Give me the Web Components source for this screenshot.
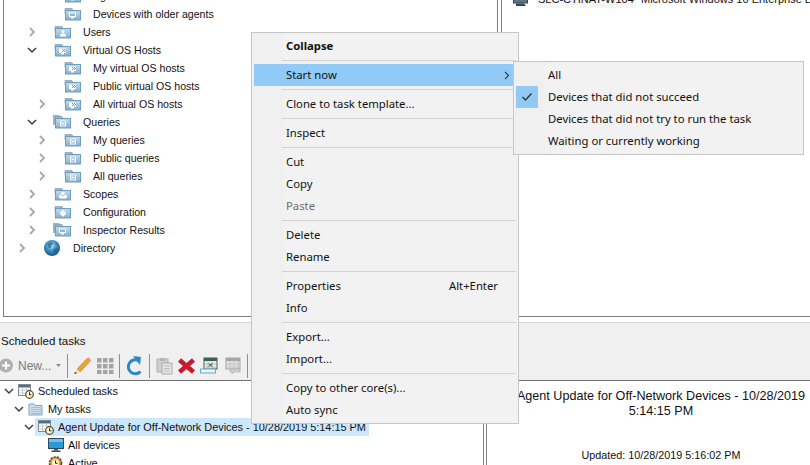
<!DOCTYPE html>
<html>
<head>
<meta charset="utf-8">
<title>Scheduled tasks</title>
<style>
  html, body { margin: 0; padding: 0; background: #fff; overflow: hidden; }
  body { font: 11px "Liberation Sans", sans-serif; color: #111; }
</style>
</head>
<body>
<app-window>
  <tree-view slot="top-left" style="--pane-top:-13px;--base:8px;--chev:20px;--icon-gap:13px;--text-gap:12px;--tree-font:10.6px">
    <tree-row level="3" icon="monitor" text="Agents"></tree-row>
    <tree-row level="3" icon="monitor" text="Devices with older agents"></tree-row>
    <tree-row level="2" chevron="closed" icon="user" text="Users"></tree-row>
    <tree-row level="2" chevron="open" icon="virtual" text="Virtual OS Hosts"></tree-row>
    <tree-row level="3" icon="virtual" text="My virtual OS hosts"></tree-row>
    <tree-row level="3" icon="virtual" text="Public virtual OS hosts"></tree-row>
    <tree-row level="3" chevron="closed" icon="virtual" text="All virtual OS hosts"></tree-row>
    <tree-row level="2" chevron="open" icon="query-stack" text="Queries"></tree-row>
    <tree-row level="3" chevron="closed" icon="query" text="My queries"></tree-row>
    <tree-row level="3" chevron="closed" icon="query" text="Public queries"></tree-row>
    <tree-row level="3" chevron="closed" icon="query" text="All queries"></tree-row>
    <tree-row level="2" chevron="closed" icon="scope" text="Scopes"></tree-row>
    <tree-row level="2" chevron="closed" icon="gear" text="Configuration"></tree-row>
    <tree-row level="2" chevron="closed" icon="monitor-stack" text="Inspector Results"></tree-row>
    <tree-row level="1" chevron="closed" icon="globe" text="Directory"></tree-row>
  </tree-view>
  <device-line slot="top-right" name="SLC-CTINAT-W104" os="Microsoft Windows 10 Enterprise Lo"></device-line>
  <task-bar slot="band" title="Scheduled tasks"></task-bar>
  <tree-view slot="bottom-left" style="--pane-top:1px;--base:0px;--chev:18px;--icon-gap:0px;--text-gap:4px;--tree-font:10.9px">
    <tree-row level="1" chevron="open" icon="task" text="Scheduled tasks"></tree-row>
    <tree-row level="2" chevron="open" icon="task-folder" text="My tasks"></tree-row>
    <tree-row level="3" chevron="open" icon="task" selected text="Agent Update for Off-Network Devices - 10/28/2019 5:14:15 PM"></tree-row>
    <tree-row level="4" chevron="none" icon="screen" text="All devices"></tree-row>
    <tree-row level="4" chevron="none" icon="active" text="Active"></tree-row>
  </tree-view>
  <task-summary slot="bottom-right" heading="Agent Update for Off-Network Devices - 10/28/2019 5:14:15 PM" updated="Updated: 10/28/2019 5:16:02 PM"></task-summary>

  <ctx-menu slot="overlay" style="left:251px;top:32px;width:268px">
    <menu-item bold label="Collapse"></menu-item>
    <menu-sep></menu-sep>
    <menu-item active arrow label="Start now"></menu-item>
    <menu-sep></menu-sep>
    <menu-item label="Clone to task template..."></menu-item>
    <menu-sep></menu-sep>
    <menu-item label="Inspect"></menu-item>
    <menu-sep></menu-sep>
    <menu-item label="Cut"></menu-item>
    <menu-item label="Copy"></menu-item>
    <menu-item disabled label="Paste"></menu-item>
    <menu-sep></menu-sep>
    <menu-item label="Delete"></menu-item>
    <menu-item label="Rename"></menu-item>
    <menu-sep></menu-sep>
    <menu-item label="Properties" shortcut="Alt+Enter"></menu-item>
    <menu-item label="Info"></menu-item>
    <menu-sep></menu-sep>
    <menu-item label="Export..."></menu-item>
    <menu-item label="Import..."></menu-item>
    <menu-sep></menu-sep>
    <menu-item label="Copy to other core(s)..."></menu-item>
    <menu-item label="Auto sync"></menu-item>
  </ctx-menu>
  <ctx-menu slot="overlay" style="left:513px;top:61px;width:291px">
    <menu-item label="All"></menu-item>
    <menu-item checked label="Devices that did not succeed"></menu-item>
    <menu-item label="Devices that did not try to run the task"></menu-item>
    <menu-item label="Waiting or currently working"></menu-item>
  </ctx-menu>
</app-window>

<script>
// folder icons share one body, only the white mark changes
const folderGrad = '<defs><linearGradient id="f" x1="0" y1="0" x2="0" y2="1"><stop offset="0" stop-color="#c3dbec"/><stop offset="1" stop-color="#85b0d0"/></linearGradient></defs>';
const folder = (mark, stacked) => `<svg width="18" height="16" viewBox="0 0 18 16">${folderGrad}
  ${stacked ? '<path d="M0 1h6l1 1v9H0z" fill="#9fb4c6"/>' : ''}
  <path d="M2 2.5h7l1 2h7v3H2z" fill="#a3b5c4" stroke="#8ba3b6" stroke-width=".8"/>
  <rect x="2.5" y="4.500" width="15" height="9.500" fill="url(#f)" stroke="#6f9dbe"/>
  ${mark}</svg>`;
const marks = {
  monitor: '<rect x="6" y="6.500" width="7" height="4.500" fill="#fff"/><rect x="7" y="7.500" width="5" height="2.500" fill="#8fb7d4"/><rect x="8" y="11" width="3" height="1.500" fill="#fff"/>',
  user: '<circle cx="10" cy="7.500" r="1.500" fill="#fff"/><path d="M7 12.500c0-2.500 1-3 3-3s3 .5 3 3z" fill="#fff"/>',
  virtual: '<rect x="6" y="6.500" width="7" height="4.500" fill="#fff"/><path d="M9 7h1v1H9zM11 7h1v1h-1zM10 8h1v1h-1zM12 8h1v1h-1zM9 9h1v1H9zM11 9h1v1h-1z" fill="#6f9dbe"/><rect x="8" y="11" width="3" height="1.500" fill="#fff"/>',
  query: '<path d="M7 6.500h6v6H7z" fill="#fff"/><path d="M9 7v5M11 7v5" stroke="#7fa8c8" stroke-width="1"/><path d="M9 9.500h2" stroke="#fff"/>',
  scope: '<circle cx="10" cy="7.500" r="1.700" fill="#fff"/><circle cx="7.500" cy="10.500" r="1.700" fill="#fff"/><circle cx="12.500" cy="10.500" r="1.700" fill="#fff"/><rect x="7" y="10" width="6" height="2.500" fill="#fff"/>',
  gear: '<circle cx="10" cy="9.300" r="2.600" fill="#fff"/><circle cx="10" cy="9.300" r="1" fill="#8fb7d4"/><path d="M10 6v6.600M6.800 9.300h6.400" stroke="#fff"/>'
};
const calendar = `<svg width="16" height="16" viewBox="0 0 16 16">
  <rect x=".5" y="1.500" width="12" height="11" fill="#fff" stroke="#7d8d97"/>
  <rect x="1" y="2" width="11" height="2.500" fill="#4f6e80"/>
  <path d="M1 7h11M1 10h11M4.500 4v8M8.500 4v8" stroke="#b7c3cb" stroke-width=".8"/>
  <circle cx="11.500" cy="11.500" r="3.800" fill="#fbf3c9" stroke="#4e4525" stroke-width="1.200"/>
  <path d="M11.500 9.300v2.500h1.800" fill="none" stroke="#222" stroke-width="1"/></svg>`;
const icons = {
  monitor: folder(marks.monitor), user: folder(marks.user), virtual: folder(marks.virtual),
  query: folder(marks.query), scope: folder(marks.scope), gear: folder(marks.gear),
  'query-stack': folder(marks.query, true), 'monitor-stack': folder(marks.monitor, true),
  globe: `<svg width="18" height="16" viewBox="0 0 18 16">
    <defs><radialGradient id="g" cx=".45" cy=".35" r=".7"><stop offset="0" stop-color="#cfe6f5"/><stop offset=".45" stop-color="#3f90c6"/><stop offset="1" stop-color="#0d4f7e"/></radialGradient></defs>
    <circle cx="9" cy="8" r="8" fill="url(#g)"/>
    <path d="M5 3c2-1 4-1 5 0 0 2-2 2-2 4 0 1-1 2-2 1-1-.5-2-3-1-5zM11 9c2-1 4-1 4 0 0 2-2 4-3 4s-2-3-1-4z" fill="#1b6a8f" opacity=".75"/></svg>`,
  task: calendar,
  'task-folder': `<svg width="16" height="16" viewBox="0 0 16 16">
    <path d="M1 3h5l1 1.500h7V14H1z" fill="#cfe0ee" stroke="#7ea3bf"/>
    <rect x="4" y="6.500" width="8" height="6" fill="#eef4f9" stroke="#8fb0c8" stroke-width=".7"/>
    <path d="M6 6.500v6M8 6.500v6M10 6.500v6M4 8.500h8M4 10.500h8" stroke="#8fb0c8" stroke-width=".6"/></svg>`,
  screen: `<svg width="16" height="16" viewBox="0 0 16 16">
    <rect x=".5" y="1.500" width="15" height="10" fill="#2a9ad6" stroke="#2b4a5e"/>
    <path d="M1 2h14v3H1z" fill="#6cc0ea"/>
    <rect x="6" y="12" width="4" height="1.500" fill="#4b5a64"/><rect x="3.500" y="13.500" width="9" height="1.500" fill="#33444f"/></svg>`,
  active: `<svg width="16" height="16" viewBox="0 0 16 16">
    <circle cx="7.500" cy="8" r="6" fill="#e5a73a" stroke="#5c4618" stroke-width="1.600" stroke-dasharray="2.200 1"/>
    <circle cx="7.500" cy="8" r="3.400" fill="#fff6d8"/><path d="M7.500 5.500V8.300h2" fill="none" stroke="#222"/></svg>`
};

class AppWindow extends HTMLElement {
  connectedCallback() {
    const shadow = this.attachShadow({ mode: 'open' });
    shadow.innerHTML = `
      <style>
        :host { display: block; position: relative; width: 810px; height: 465px; overflow: hidden; background: #fff; }
        .top { display: grid; grid-template-columns: 495px 3px 1fr; height: 317px; padding-left: 3px; }
        .pane { border: 0 solid #7f7f7f; border-bottom-width: 1px; overflow: hidden; }
        .left { border-left-width: 1px; border-right-width: 1px; }
        .right { border-left-width: 1px; }
        .band { margin-top: 5px; height: 59px; }
        .bottom { display: grid; grid-template-columns: 484px 2px 349px; height: 84px; }
        .bl { border-right: 1px solid #7f7f7f; overflow: hidden; }
        .br { border-left: 1px solid #7f7f7f; overflow: hidden; }
      </style>
      <div class="top">
        <div class="pane left"><slot name="top-left"></slot></div>
        <div></div>
        <div class="pane right"><slot name="top-right"></slot></div>
      </div>
      <div class="band"><slot name="band"></slot></div>
      <div class="bottom">
        <div class="bl"><slot name="bottom-left"></slot></div>
        <div></div>
        <div class="br"><slot name="bottom-right"></slot></div>
      </div>
      <slot name="overlay"></slot>`;
  }
}

class TreeView extends HTMLElement {
  connectedCallback() {
    const shadow = this.attachShadow({ mode: 'open' });
    shadow.innerHTML = `
      <style>
        :host { display: block; margin-top: var(--pane-top); font: var(--tree-font) "Liberation Sans", sans-serif; color: #111; }
      </style>
      <slot></slot>`;
  }
}

class TreeRow extends HTMLElement {
  connectedCallback() {
    const shadow = this.attachShadow({ mode: 'open' });
    const level = +this.getAttribute('level');
    const chevron = this.getAttribute('chevron');
    const glyph = chevron === 'open'
      ? '<svg width="10" height="10" viewBox="0 0 10 10"><path d="M1 3l4 4 4-4" fill="none" stroke="#404040" stroke-width="1.500"/></svg>'
      : chevron === 'closed'
        ? '<svg width="10" height="10" viewBox="0 0 10 10"><path d="M3 1l4 4-4 4" fill="none" stroke="#a8a8a8" stroke-width="1.800"/></svg>'
        : '';
    shadow.innerHTML = `
      <style>
        :host { display: flex; align-items: center; height: 18px; padding-left: calc(var(--base) + ${(level - 1) * 10}px); white-space: nowrap; }
        .chev { flex: 0 0 var(--chev); width: var(--chev); display: flex; justify-content: center; align-items: center; }
        .label { display: flex; align-items: center; height: 18px; margin-left: calc(var(--icon-gap) - 3px); padding: 0 3px; }
        .label.sel { background: #cce8ff; }
        .icon { display: flex; width: 16px; }
        .icon svg { flex: none; margin-left: var(--svg-shift, 0); }
        .text { margin-left: var(--text-gap); padding-bottom: 1px; }
      </style>
      <span class="chev">${glyph}</span>
      <span class="label ${this.hasAttribute('selected') ? 'sel' : ''}">
        <span class="icon">${icons[this.getAttribute('icon')]}</span>
        <span class="text">${this.getAttribute('text')}</span>
      </span>`;
    if (icons[this.getAttribute('icon')].includes('width="18"')) {
      shadow.querySelector('.icon').style.setProperty('--svg-shift', '-2px');
    }
  }
}

class DeviceLine extends HTMLElement {
  connectedCallback() {
    const shadow = this.attachShadow({ mode: 'open' });
    shadow.innerHTML = `
      <style>
        :host { display: flex; align-items: center; height: 18px; margin-top: -10px; padding-left: 11px; white-space: nowrap; font: 11px "Liberation Sans", sans-serif; color: #111; }
        svg { flex: none; }
        .name { background: #f5f5f5; margin-left: 7px; padding: 0 2px; width: 95px; height: 18px; line-height: 18px; }
        .os { margin-left: 6px; }
      </style>
      <svg width="16" height="16" viewBox="0 0 16 16"><rect x=".5" y="1" width="14" height="11" fill="#5d7484" stroke="#3a4750"/><path d="M3 12.500h8l2 2.500H3z" fill="#39454d"/></svg>
      <span class="name">${this.getAttribute('name')}</span>
      <span class="os">${this.getAttribute('os')}</span>`;
  }
}

class TaskBar extends HTMLElement {
  connectedCallback() {
    const shadow = this.attachShadow({ mode: 'open' });
    shadow.innerHTML = `
      <style>
        :host { display: block; height: 59px; box-sizing: border-box; background: #f0f0f0; border-top: 1px solid #d2d2d2; border-bottom: 1px solid #6f6f6f; overflow: hidden; white-space: nowrap; }
        .title { font: 11.5px/18px "Liberation Sans", sans-serif; color: #111; padding: 9px 0 0 1px; height: 18px; }
        .tools { display: flex; align-items: center; height: 29px; margin-top: 1px; font: 12px "Liberation Sans", sans-serif; color: #7c7c7c; }
        .tools svg { flex: none; }
        .sep { width: 1px; height: 24px; background: #8f8f8f; flex: none; }
      </style>
      <div class="title">${this.getAttribute('title')}</div>
      <div class="tools">
        <svg style="margin-left:-1px" width="15" height="15" viewBox="0 0 15 15"><circle cx="7" cy="7.500" r="7" fill="#b0b0b0"/><path d="M7 3.500v8M3 7.500h8" stroke="#fff" stroke-width="2"/></svg>
        <span style="margin-left:4px;width:38px">New...</span>
        <svg width="5" height="3" viewBox="0 0 5 3" style="margin-right:6px"><path d="M0 0h5L2.500 3z" fill="#8a8a8a"/></svg>
        <span class="sep"></span>
        <svg style="margin-left:4px" width="20" height="20" viewBox="0 0 20 20"><path d="M5 13L15 2.500l3 3L8 16z" fill="#efa32d" stroke="#c9801a" stroke-width=".6"/><path d="M15 2.500l1.400-1.300 3 3L18 5.500z" fill="#e98f8f"/><path d="M5 13l3 3-5 2z" fill="#f4d9a6"/><path d="M2.700 16.600L4 16l.6 1.300-2.300.9z" fill="#333"/></svg>
        <svg style="margin-left:5px" width="17" height="17" viewBox="0 0 17 17" fill="#a3a3a3"><path d="M0 1h4.500v4.500H0zM6 1h4.500v4.500H6zM12 1h4.500v4.500H12zM0 7h4.500v4.500H0zM6 7h4.500v4.500H6zM12 7h4.500v4.500H12zM0 13h4.500v4H0zM6 13h4.500v4H6zM12 13h4.500v4H12z"/></svg>
        <span class="sep" style="margin-left:5px"></span>
        <svg style="margin-left:6px" width="17" height="20" viewBox="0 0 17 20"><path d="M12.500 4.500A7 7 0 1 0 14.500 15.500" fill="none" stroke="#2b88c8" stroke-width="3"/><path d="M7 0l8 1-1 8z" fill="#2b88c8"/></svg>
        <span class="sep" style="margin-left:6px"></span>
        <svg style="margin-left:6px" width="17" height="18" viewBox="0 0 17 18"><rect x="1" y="2" width="11" height="13" fill="#d0d0d0" stroke="#b0b0b0"/><rect x="4" y="1" width="5" height="3" fill="#b5b5b5"/><rect x="6" y="6" width="10" height="11" fill="#e6e6e6" stroke="#aaa"/><path d="M8 9h6M8 11.500h6M8 14h6" stroke="#bbb"/></svg>
        <svg style="margin-left:4px" width="19" height="18" viewBox="0 0 19 18"><path d="M2.500 3L16.500 15M16.500 3L2.500 15" stroke="#c8192e" stroke-width="4.600"/></svg>
        <svg style="margin-left:4px" width="18" height="18" viewBox="0 0 18 18"><rect x="4" y="1" width="13" height="11" fill="#e8efe9" stroke="#3f5f55"/><rect x="4" y="1" width="13" height="3" fill="#3f5f55"/><path d="M8 4v8M12 4v8M4 7h13M4 10h13" stroke="#9fb0a8" stroke-width=".7"/><path d="M9 6.500l3 3M12 6.500l-3 3" stroke="#333"/><rect x=".5" y="12" width="15" height="4" fill="#eaf5fb" stroke="#6ca8c8"/></svg>
        <svg style="margin-left:7px" width="17" height="18" viewBox="0 0 17 18"><rect x="1" y="1" width="14" height="11" fill="#e2e2e2" stroke="#a6a6a6"/><rect x="1" y="1" width="14" height="3" fill="#a6a6a6"/><path d="M5 4v8M9 4v8M13 4v8M1 7h14M1 10h14" stroke="#bdbdbd" stroke-width=".7"/><path d="M5 12h10v3H9l-2 2v-2H5z" fill="#cfcfcf" stroke="#aaa" stroke-width=".6"/></svg>
        <span class="sep" style="margin-left:5px"></span>
      </div>`;
  }
}

class TaskSummary extends HTMLElement {
  connectedCallback() {
    const shadow = this.attachShadow({ mode: 'open' });
    shadow.innerHTML = `
      <style>
        :host { display: block; text-align: center; padding-top: 8px; font: 12.6px/15px "Liberation Sans", sans-serif; color: #111; }
        .head { padding: 0 20px; }
        .upd { margin-top: 29px; font-size: 10.8px; }
      </style>
      <div class="head">${this.getAttribute('heading')}</div>
      <div class="upd">${this.getAttribute('updated')}</div>`;
  }
}

class CtxMenu extends HTMLElement {
  connectedCallback() {
    const shadow = this.attachShadow({ mode: 'open' });
    shadow.innerHTML = `
      <style>
        :host { display: block; position: absolute; box-sizing: border-box; padding: 2px; background: #f2f2f2; border: 1px solid #c6c6c6; font: 11.3px "Noto Sans", sans-serif; color: #111; }
        .rail { position: absolute; left: 0; top: 0; bottom: 0; width: 31px; background: #f0f0f0; }
        .items { position: relative; }
      </style>
      <div class="rail"></div>
      <div class="items"><slot></slot></div>`;
  }
}

class MenuItem extends HTMLElement {
  connectedCallback() {
    const shadow = this.attachShadow({ mode: 'open' });
    const shortcut = this.getAttribute('shortcut');
    const mark = this.hasAttribute('checked')
      ? '<span class="check"><svg width="12" height="10" viewBox="0 0 12 10"><path d="M1.500 5l3 3 6-6.500" fill="none" stroke="#333" stroke-width="1.400"/></svg></span>'
      : '';
    shadow.innerHTML = `
      <style>
        :host { display: flex; align-items: center; position: relative; height: 22px; padding-left: 32px; white-space: nowrap; }
        :host([active]) { background: #91c9f7; }
        :host([bold]) { font-weight: 700; }
        :host([disabled]) { color: #6d6d6d; }
        .label { flex: 1; padding-bottom: 2px; }
        .key { margin-right: 18px; padding-bottom: 2px; }
        .arrow { margin-right: 6px; display: flex; }
        .check { position: absolute; left: 0; top: 0; width: 22px; height: 22px; background: #91c9f7; display: flex; align-items: center; justify-content: center; }
      </style>
      ${mark}
      <span class="label">${this.getAttribute('label')}</span>
      ${shortcut ? `<span class="key">${shortcut}</span>` : ''}
      ${this.hasAttribute('arrow') ? '<span class="arrow"><svg width="6" height="9" viewBox="0 0 6 9"><path d="M1 .8l3.500 3.700L1 8.200" fill="none" stroke="#333" stroke-width="1.100"/></svg></span>' : ''}`;
  }
}

class MenuSep extends HTMLElement {
  connectedCallback() {
    const shadow = this.attachShadow({ mode: 'open' });
    shadow.innerHTML = `
      <style>
        :host { display: block; height: 7px; padding: 3px 0 3px 28px; box-sizing: border-box; }
        div { height: 1px; background: #d2d2d2; }
      </style>
      <div></div>`;
  }
}

customElements.define('app-window', AppWindow);
customElements.define('tree-view', TreeView);
customElements.define('tree-row', TreeRow);
customElements.define('device-line', DeviceLine);
customElements.define('task-bar', TaskBar);
customElements.define('task-summary', TaskSummary);
customElements.define('ctx-menu', CtxMenu);
customElements.define('menu-item', MenuItem);
customElements.define('menu-sep', MenuSep);
</script>
</body>
</html>
